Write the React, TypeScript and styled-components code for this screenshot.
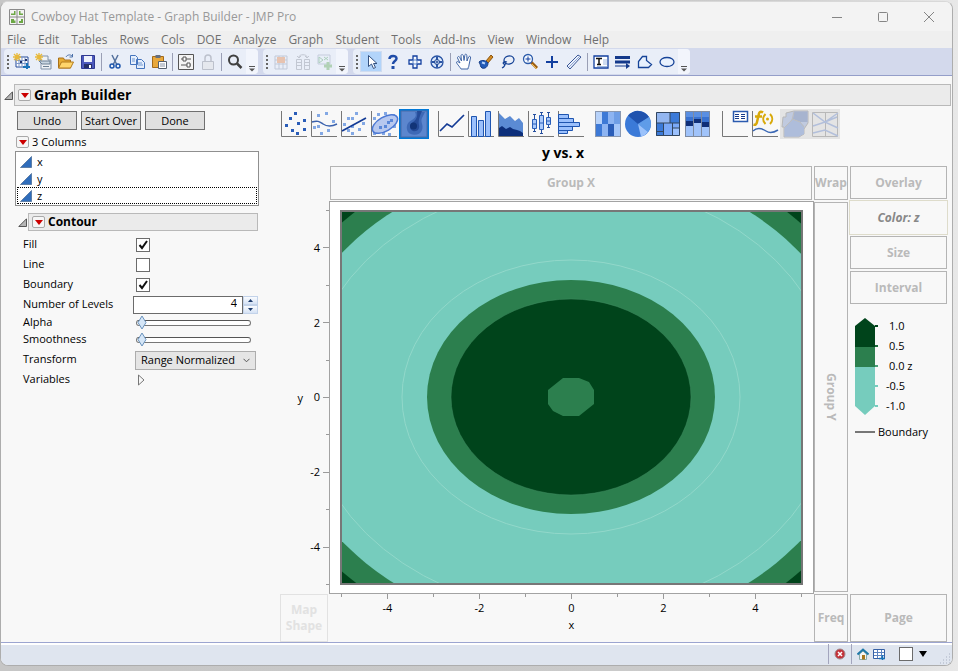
import React from "react";
import styled, { createGlobalStyle, css } from "styled-components";

const GlobalStyle = createGlobalStyle`
  * { box-sizing: border-box; }
  body {
    margin: 0;
    background: #cbcbcb;
    font-family: "Open Sans", "Noto Sans", sans-serif;
    font-size: 11px;
    line-height: 16px;
    color: #000;
  }
  button, input, select { font: inherit; color: inherit; }
  svg { display: block; }
`;

/* ---------- window frame ---------- */

const Desktop = styled.div`
  display: flex;
  min-height: 100vh;
  padding: 1px 5px 5px 0;
  background: linear-gradient(90deg, #c6c6c6 0%, #cbcbcb 80%, #e8e8e8 100%);
`;

const AppWindow = styled.div`
  display: flex;
  flex-direction: column;
  flex: 1;
  min-width: 0;
  border: 1px solid #adadad;
  border-top-color: #d8d8d8;
  border-radius: 8px;
  overflow: hidden;
  background: #f8f8f8;
`;

const TitleBar = styled.header`
  display: flex;
  align-items: center;
  height: 29px;
  padding-left: 8px;
  background: #f3f3f3;
  color: #999;
`;

const WindowTitle = styled.h1`
  flex: 1;
  margin: 0 0 0 6px;
  font-size: 12px;
  font-weight: 400;
`;

const CaptionButton = styled.button`
  display: grid;
  place-items: center;
  width: 46px;
  height: 29px;
  padding: 0;
  border: 0;
  background: none;
`;

const MenuBar = styled.nav`
  display: flex;
  height: 17px;
  background: #efefef;
`;

const MenuItem = styled.button`
  padding: 0 6px;
  border: 0;
  background: none;
  color: #6f6f6f;
  font-size: 12px;
  line-height: 17px;
`;

/* ---------- toolbar ---------- */

const ToolbarArea = styled.div`
  display: flex;
  gap: 5px;
  height: 28px;
  padding: 1px 0 1px 3px;
  border-bottom: 1px solid #949ec9;
  background: #d3d9ec;
`;

const Strip = styled.div`
  display: flex;
  align-items: center;
  height: 25px;
  border-radius: 4px;
  background: #e9eef8;
`;

const Grip = styled.span`
  width: 2px;
  height: 14px;
  margin: 0 2px 0 3px;
  background: repeating-linear-gradient(#666 0 2px, transparent 2px 4px);
`;

const ToolButton = styled.button<{ $active?: boolean; $dim?: boolean }>`
  display: grid;
  place-items: center;
  width: 22px;
  height: 21px;
  padding: 0;
  border: 1px solid ${(p) => (p.$active ? "#cfdcf0" : "transparent")};
  background: ${(p) => (p.$active ? "#b2d4fa" : "none")};
  opacity: ${(p) => (p.$dim ? 0.35 : 1)};
`;

const Separator = styled.span`
  width: 1px;
  height: 18px;
  margin: 0 2px;
  background: #9a9fb5;
`;

const OverflowButton = styled.button`
  display: flex;
  align-items: flex-end;
  justify-content: center;
  align-self: stretch;
  width: 12px;
  padding: 0 0 2px;
  border: 0;
  border-radius: 0 4px 4px 0;
  background: #f2f5fc;
`;

/* ---------- outline headers ---------- */

const OutlineRow = styled.div`
  display: flex;
  align-items: center;
  gap: 1px;
`;

const OutlineBox = styled.div<{ $small?: boolean }>`
  display: flex;
  flex: 1;
  align-items: center;
  gap: 3px;
  height: ${(p) => (p.$small ? 18 : 22)}px;
  padding-left: 3px;
  border: 1px solid #b9b9b9;
  background: #ebebeb;
`;

const OutlineTitle = styled.h2<{ $small?: boolean }>`
  margin: 0;
  font-size: ${(p) => (p.$small ? 12 : 14)}px;
  font-weight: 700;
  line-height: 16px;
`;

const BareButton = styled.button`
  display: grid;
  place-items: center;
  padding: 0;
  border: 0;
  background: none;
`;

const RedButton = styled.button`
  display: grid;
  place-items: center;
  width: 13px;
  height: 12px;
  padding: 0;
  border: 1px solid #a9a9a9;
  border-radius: 2px;
  background: #f6f6f6;
`;

/* ---------- content ---------- */

const Content = styled.main`
  display: flex;
  flex-direction: column;
  flex: 1;
  padding: 8px 1px 0 3px;
`;

const Panels = styled.div`
  display: flex;
  flex: 1;
  gap: 20px;
  padding: 3px 3px 0 11px;
`;

const ControlPanel = styled.aside`
  width: 244px;
  padding-top: 2px;
`;

const ButtonRow = styled.div`
  display: flex;
  gap: 4px;
  padding-left: 2px;
`;

const PushButton = styled.button`
  width: 60px;
  height: 19px;
  padding: 0;
  border: 1px solid #707070;
  background: #e0e0e0;
  line-height: 16px;
  white-space: nowrap;
`;

const ColumnsHeading = styled.div`
  display: flex;
  align-items: center;
  gap: 3px;
  height: 21px;
  padding: 3px 0 0 1px;
`;

const ColumnList = styled.ul`
  margin: 0;
  padding: 1px;
  border: 1px solid #8f8f8f;
  background: #fff;
  list-style: none;
`;

const ColumnItem = styled.li<{ $focused?: boolean }>`
  display: flex;
  align-items: center;
  gap: 5px;
  height: 17px;
  padding-left: 2px;
  border: 1px dotted ${(p) => (p.$focused ? "#000" : "transparent")};
`;

const ContourHeader = styled(OutlineRow)`
  padding: 7px 1px 0 3px;
`;

const OptionGrid = styled.div`
  display: grid;
  grid-template-columns: 110px 125px;
  grid-template-rows: 20px 20px 20px 19px 17px 18px 22px 18px;
  align-items: center;
  padding: 4px 0 0 8px;
`;

const OptionLabel = styled.label`
  padding-bottom: 2px;
  line-height: 16px;
`;

const CheckBox = styled.input`
  appearance: none;
  width: 14px;
  height: 14px;
  margin: 0 0 0 3px;
  border: 1px solid #6b6b6b;
  background: #fff;
  &:checked {
    background: #fff url("data:image/svg+xml,%3Csvg xmlns='http://www.w3.org/2000/svg' viewBox='0 0 12 12'%3E%3Cpath d='M2.5 6l2.5 3 5-7' fill='none' stroke='%23111' stroke-width='2'/%3E%3C/svg%3E");
  }
`;

const NumberField = styled.div`
  display: flex;
  height: 18px;
`;

const NumberInput = styled.input`
  width: 110px;
  padding: 0 5px 3px;
  border: 1px solid #6b6b6b;
  background: #fff;
  text-align: right;
`;

const Spinner = styled.div`
  display: flex;
  flex-direction: column;
  width: 15px;
`;

const SpinButton = styled.button`
  display: grid;
  place-items: center;
  flex: 1;
  padding: 0;
  border: 1px solid #c3d3ea;
  background: linear-gradient(#fafcff, #d5e2f5);
`;

const thumb = css`
  appearance: none;
  width: 10px;
  height: 15px;
  margin-top: -6px;
  border: 0;
  background: url("data:image/svg+xml,%3Csvg xmlns='http://www.w3.org/2000/svg' viewBox='0 0 10 15'%3E%3Cpath d='M5 1l4 6.5-4 6.500-4-6.500z' fill='%23d5e6f7' stroke='%236a93bd'/%3E%3C/svg%3E");
`;

const Slider = styled.input`
  appearance: none;
  width: 115px;
  height: 15px;
  margin: 0 0 0 3px;
  background: none;
  &::-webkit-slider-runnable-track {
    height: 6px;
    border: 1px solid #777;
    border-top-color: #555;
    border-radius: 3px;
    background: #fff;
  }
  &::-webkit-slider-thumb { ${thumb} }
`;

const Dropdown = styled.select`
  appearance: none;
  width: 121px;
  height: 19px;
  margin-left: 2px;
  padding: 0 0 0 5px;
  border: 1px solid #adadad;
  border-radius: 0;
  background: #e5e5e5 url("data:image/svg+xml,%3Csvg xmlns='http://www.w3.org/2000/svg' viewBox='0 0 7 5'%3E%3Cpath d='M.5.8l3 3 3-3' fill='none' stroke='%23555'/%3E%3C/svg%3E") no-repeat right 5px center / 7px 5px;
`;

const VariablesButton = styled(BareButton)`
  justify-self: start;
  margin-left: 4px;
`;

/* ---------- graph ---------- */

const GraphPanel = styled.section`
  display: flex;
  flex-direction: column;
  flex: 1;
  min-width: 0;
`;

const ElementBar = styled.div`
  display: flex;
  gap: 7px;
`;

const ElementGroup = styled.div`
  display: flex;
`;

const ElementButton = styled.button<{ $active?: boolean }>`
  width: 30px;
  height: 30px;
  padding: 0;
  border: 0;
  background: none;
  &:disabled { background: #e4e4e4; }
  ${(p) => p.$active && css`background: #0078d7;`}
`;

const GraphTitle = styled.h3`
  margin: 0;
  padding-right: 101px;
  font-size: 14px;
  line-height: 27px;
  text-align: center;
`;

const GraphGrid = styled.div`
  display: grid;
  flex: 1;
  grid-template-columns: 50px minmax(0, 1fr) 34px 100px;
  grid-template-rows: 35px minmax(360px, 1fr) 48px;
`;

const DropZone = styled.button<{ $faint?: boolean }>`
  display: grid;
  place-items: center;
  padding: 0;
  border: 1px solid ${(p) => (p.$faint ? "#e2e2e2" : "#b4b4b4")};
  background: none;
  color: ${(p) => (p.$faint ? "#e2e2e2" : "#bababa")};
  font-size: 12px;
  font-weight: 700;
  line-height: 16px;
`;

const GroupXZone = styled(DropZone)`
  grid-column: 2;
  margin: 0 2px 1px 1px;
`;

const WrapZone = styled(DropZone)`
  margin-bottom: 1px;
`;

const GroupYZone = styled(DropZone)`
  grid-column: 3;
  grid-row: 2;
  margin: 1px 0 2px;
  span { writing-mode: vertical-rl; }
`;

const MapZone = styled(DropZone)`
  grid-column: 1;
  grid-row: 3;
  margin: 0 1px;
`;

const PageZone = styled(DropZone)`
  margin: 0 1px 0 2px;
`;

const RoleColumn = styled.div`
  display: flex;
  flex-direction: column;
  grid-column: 4;
  grid-row: 1 / span 2;
  padding-left: 1px;
`;

const RoleZone = styled(DropZone)`
  height: 33px;
  margin: 0 1px 2px;
`;

const ColorZone = styled(DropZone)`
  height: 35px;
  margin: -1px 0 1px;
  border-color: #dedccb;
  color: #888;
  font-style: italic;
`;

const Legend = styled.div`
  display: flex;
  gap: 7px;
  padding: 10px 0 0 6px;
`;

const LegendLabels = styled.ol`
  margin: 0;
  padding: 0;
  list-style: none;
  line-height: 20px;
`;

const LegendLabel = styled.li<{ $negative?: boolean }>`
  margin-left: ${(p) => (p.$negative ? 0 : 3)}px;
`;

const BoundaryKey = styled.div`
  display: flex;
  align-items: center;
  gap: 3px;
  padding: 8px 0 0 6px;
`;

const BoundaryLine = styled.span`
  width: 20px;
  height: 2px;
  background: #777;
`;

const YAxis = styled.div`
  display: flex;
  align-items: stretch;
  grid-column: 1;
  grid-row: 2;
`;

const YTitle = styled.span`
  align-self: center;
  width: 24px;
  text-align: right;
`;

const YTicks = styled.div`
  display: flex;
  flex: 1;
  flex-direction: column;
  justify-content: space-between;
  padding: 9px 0;
`;

const YTick = styled.div`
  display: flex;
  align-items: center;
  justify-content: flex-end;
  gap: 3px;
  height: 1px;
`;

const YMark = styled.span<{ $major: boolean }>`
  width: ${(p) => (p.$major ? 6 : 3)}px;
  height: 1px;
  background: #9a9a9a;
`;

const PlotFrame = styled.div`
  display: flex;
  grid-column: 2;
  grid-row: 2;
  padding: 8px 10px;
  border: 1px solid #a3a3a3;
  background: #fff;
`;

const PlotBox = styled.div`
  flex: 1;
  min-width: 0;
  border: 2px solid #777;
  background: #76ccbd;
  overflow: hidden;
`;

const PlotSvg = styled.svg`
  width: 100%;
  height: 100%;
`;

const XAxis = styled.div`
  grid-column: 2;
  grid-row: 3;
  text-align: center;
`;

const XTicks = styled.div`
  display: flex;
  justify-content: space-between;
  height: 23px;
  padding: 0 12px;
`;

const XTick = styled.div`
  display: flex;
  flex-direction: column;
  align-items: center;
  gap: 1px;
  width: 1px;
  white-space: nowrap;
`;

const XMark = styled.span<{ $major: boolean }>`
  width: 1px;
  height: ${(p) => (p.$major ? 5 : 3)}px;
  background: #9a9a9a;
`;

/* ---------- status bar ---------- */

const StatusBar = styled.footer`
  display: flex;
  align-items: center;
  justify-content: flex-end;
  height: 23px;
  padding-right: 1px;
  border-top: 1px solid #9ca5d0;
  box-shadow: inset 0 2px #fff;
  background: #dfe5ef;
`;

const StatusSeparator = styled.span`
  width: 1px;
  height: 20px;
  background: #a3a5bd;
`;

const StatusButton = styled(BareButton)`
  width: 16px;
`;

const StatusCheck = styled(CheckBox)`
  margin: 0 6px 0 12px;
`;

const ErrorButton = styled(BareButton)`
  width: 22px;
`;

const HomeGroup = styled.div`
  display: flex;
  padding-left: 3px;
`;

const ResizeGrip = styled.span`
  align-self: flex-end;
  margin-left: 12px;
`;

/* ---------- icons ---------- */

type IconProps = { children: React.ReactNode; w?: number; h?: number };
const Icon = ({ children, w = 18, h = 18 }: IconProps) => (
  <svg width={w} height={h} viewBox={`0 0 ${w} ${h}`} aria-hidden="true" fill="none">{children}</svg>
);

const Spark = () => (
  <path d="M4 0v8M0 4h8M1 1l6 6M7 1l-6 6" stroke="#e8b93a" strokeWidth="1.300" />
);

const JmpLogo = () => (
  <Icon w={16} h={16}>
    <path d="M.5.5h15v15H.5zM8 .5v15M.5 8h15" stroke="#8a8a8a" />
    <path d="M5 2h1.500v4H2V4.500h3zM10 2h1.500v2.500H14V6h-4zM2 10h3v1.500H6.500V14H2zM10 12h2v-2h2v4h-4z" fill="#6ca845" />
  </Icon>
);

const icons: Record<string, React.ReactNode> = {
  "New Data Table": (
    <Icon>
      <path d="M3 4h12v10H3z" fill="#fff" stroke="#244a9a" />
      <path d="M3 7.500h12M3 10.500h12M6 4v10M9 4v10M12 4v10" stroke="#7d97c8" />
      <path d="M7 8h2v2H7zM12 6h2v2h-2z" fill="#1d2f66" />
      <path d="M10 14h7M14 10v6" stroke="#1a73b8" strokeWidth="2" />
      <Spark />
    </Icon>
  ),
  "New Script": (
    <Icon>
      <path d="M5 3h8v4h3v9H6V7H5z" fill="#eef2f6" stroke="#8092a8" />
      <path d="M4 8h11v3H7z" fill="#c8d6e2" stroke="#6c8094" />
      <path d="M8 13.500h6" stroke="#6c8094" />
      <Spark />
    </Icon>
  ),
  Open: (
    <Icon>
      <path d="M1.500 15V5h5l1 2h6v8z" fill="#e7ad35" stroke="#a9711a" />
      <path d="M1.500 15l3-6h12l-3 6z" fill="#ffd66b" stroke="#b27a1d" />
      <path d="M9 4c1-2 4-3 6-1M15.500 1v3h-3" stroke="#4a6fa8" />
    </Icon>
  ),
  Save: (
    <Icon>
      <path d="M2.500 2.500h13v13h-13z" fill="#4d59bd" stroke="#2f3990" />
      <path d="M5 3h8v6H5z" fill="#eef1fb" />
      <path d="M5 11h8v4H5z" fill="#262f66" />
      <path d="M10 12h2v3h-2z" fill="#fff" />
    </Icon>
  ),
  Cut: (
    <Icon>
      <path d="M6 2l5 10M12 2L7 12" stroke="#53709c" strokeWidth="1.500" />
      <circle cx="6" cy="13" r="2" stroke="#1d55ab" strokeWidth="1.500" />
      <circle cx="12" cy="13" r="2" stroke="#1d55ab" strokeWidth="1.500" />
    </Icon>
  ),
  Copy: (
    <Icon>
      <path d="M2.500 2.500h5l2 2v7h-7zM8.500 6.500h5l3 3v6h-8z" fill="#e6effc" stroke="#4574bd" />
      <path d="M4 6h3M4 8h3M10 10h4M10 12h5" stroke="#6e96d1" />
    </Icon>
  ),
  Paste: (
    <Icon>
      <path d="M2.500 3.500h11v11h-11z" fill="#e9a83b" stroke="#a36a1b" />
      <path d="M5.500 2h5v3h-5z" fill="#666f7e" />
      <path d="M8.500 8.500h8v7h-8z" fill="#fff" stroke="#55606f" />
      <path d="M10 11h5M10 13h5" stroke="#8994a6" />
    </Icon>
  ),
  Preferences: (
    <Icon>
      <path d="M1.500 1.500h15v15h-15z" fill="#f4f4f4" stroke="#555" />
      <path d="M4 6h10M4 12h10" stroke="#555" />
      <path d="M6 4h3v4H6zM10 10h3v4h-3z" fill="#fff" stroke="#555" />
    </Icon>
  ),
  Lock: (
    <Icon>
      <path d="M3.500 8.500h11v8h-11z" fill="#e5e8ee" stroke="#bcc1cc" />
      <path d="M6 8V5a3 3 0 016 0v3" stroke="#bcc1cc" strokeWidth="1.500" />
    </Icon>
  ),
  Search: (
    <Icon>
      <circle cx="7.500" cy="7" r="4.500" stroke="#404040" strokeWidth="2" />
      <path d="M11 10.500l4.500 4.500" stroke="#404040" strokeWidth="2.500" />
    </Icon>
  ),
  "Data Filter": (
    <Icon>
      <path d="M3 3h12v13H3zM3 7h12M3 11h12M7 3v13M11 3v13" stroke="#7b87a0" />
      <path d="M5 4h8v6H5z" fill="#e6752e" />
    </Icon>
  ),
  Compare: (
    <Icon>
      <path d="M2.500 6.500h5v10h-5zM10.500 6.500h5v10h-5zM2.500 9.500h5M2.500 12.500h5M10.500 9.500h5M10.500 12.500h5" stroke="#7b808c" />
      <path d="M5 4c0-3 8-3 8 0M3 3l2 2 2-2M11 3l2 2 2-2" stroke="#7b808c" />
    </Icon>
  ),
  "Add Rows": (
    <Icon>
      <path d="M2 2h12v9H2z" fill="#e8eef8" stroke="#8391ae" />
      <path d="M3 4l4 3-4 3zM8 4l4 3M12 4l-4 3" stroke="#3f9650" />
      <path d="M12 9v8M8 13h8" stroke="#4b9d3d" strokeWidth="3" />
    </Icon>
  ),
  Arrow: (
    <Icon>
      <path d="M6.500 2.500v11l3-2.500 2 4.500 2-1-2-4h3.500z" fill="#fff" stroke="#33507f" />
    </Icon>
  ),
  Help: (
    <Icon>
      <path d="M5.500 6c0-4 7-4 7-.5 0 2.500-3.500 2.500-3.500 5.500" stroke="#1f4ca8" strokeWidth="2.500" />
      <path d="M7.500 13h3v3h-3z" fill="#1f4ca8" />
    </Icon>
  ),
  Selection: (
    <Icon>
      <path d="M7 3h4v4h4v4h-4v4H7v-4H3V7h4z" fill="#f5f9ff" stroke="#123f9f" strokeWidth="1.300" />
      <path d="M7 7h4v4H7z" stroke="#5f86c8" />
    </Icon>
  ),
  Scroller: (
    <Icon>
      <circle cx="9" cy="9" r="6" fill="#dce9fb" stroke="#2a55a5" strokeWidth="1.300" />
      <path d="M9 3.500v11M3.500 9h11" stroke="#2a55a5" strokeWidth="2" />
      <circle cx="9" cy="9" r="2.500" fill="#eff6ff" stroke="#174293" />
      <path d="M9 7.500v3M7.500 9h3" stroke="#174293" />
    </Icon>
  ),
  Grabber: (
    <Icon>
      <path d="M6 16c-1-2-5-6-4.500-7s2 0 3.500 1L2.500 5c0-2 2-2 2.500 0l1.500 3L6 3c0-2 2-2 2.500 0L9 7.500l.8-5c.2-2 2-1.500 2 0L12 8l1.500-4c1-1.500 2.500-.5 2 1l-1.500 7c0 2-1 2-1 4z" fill="#fff" stroke="#3f64a5" />
    </Icon>
  ),
  Brush: (
    <Icon>
      <path d="M9 8l5-6 2 2-5 6z" fill="#d38a21" stroke="#895411" />
      <path d="M2 9c3-3 8-1 9 1 0 4-3 6-6 5-2-1-1-3-3-6z" fill="#235bb7" stroke="#163e87" />
      <path d="M5 9.500l3 1" stroke="#b4d2fc" strokeWidth="2" />
    </Icon>
  ),
  Lasso: (
    <Icon>
      <ellipse cx="10" cy="7" rx="5" ry="4" stroke="#164396" strokeWidth="1.300" transform="rotate(-15 10 7)" />
      <path d="M8 9c-3-1-5 1-3 2 1 1 3-1 1-1M6 11c0 2-1 3-3 4" stroke="#164396" strokeWidth="1.300" />
    </Icon>
  ),
  Magnifier: (
    <Icon>
      <path d="M10 9l6 6" stroke="#9c5e13" strokeWidth="3" />
      <path d="M11 11l5 5" stroke="#f1bf51" />
      <circle cx="7" cy="6" r="4.500" fill="#f4f9ff" stroke="#2c5baa" strokeWidth="1.300" />
      <path d="M7 3.500v5M4.500 6h5" stroke="#123f9f" />
    </Icon>
  ),
  Crosshairs: <Icon><path d="M9 3v12M3 9h12" stroke="#123f9f" strokeWidth="2" /></Icon>,
  Line: (
    <Icon>
      <path d="M2 13L13 2l3 2L5 16z" fill="#eaf0fb" stroke="#3b5796" />
      <path d="M4 14L14 4" stroke="#8ea5d4" />
    </Icon>
  ),
  Annotate: (
    <Icon>
      <path d="M2 3h14v12H2z" fill="#fff" stroke="#123f9f" strokeWidth="1.300" />
      <path d="M4 5.500h6M7 6v5M5 11.500h4" stroke="#111" strokeWidth="1.500" />
      <path d="M11 7h4M11 9h4M11 11h4M5 13.500h10" stroke="#9eb9e1" />
    </Icon>
  ),
  "Draw Line": (
    <Icon>
      <path d="M1 4.500h15M1 9h15" stroke="#14398b" strokeWidth="3" />
      <path d="M1 13h13" stroke="#14398b" />
      <path d="M12 10l4 3-4 3z" fill="#14398b" />
    </Icon>
  ),
  Polygon: (
    <Icon><path d="M2.500 14.500v-6l4-5h4v4l5 4-3 3z" fill="#e8f1fe" stroke="#174498" strokeWidth="1.300" /></Icon>
  ),
  Oval: <Icon><ellipse cx="9" cy="9" rx="7" ry="4.500" fill="#e8f1fe" stroke="#174498" strokeWidth="1.300" /></Icon>,
};

const axis = <path d="M2.500 2v25.500H28" stroke="#777" />;
const dots = (pts: number[][], fill: string) =>
  pts.map(([x, y]) => (
    <rect key={`${x}-${y}`} x={x - 1} y={y - 1} width="3" height="3" fill={fill} />
  ));

const chartIcons: Record<string, React.ReactNode> = {
  Points: <>{axis}{dots([[16, 4], [11, 9], [25, 11], [7, 16], [19, 14], [13, 21], [25, 20], [18, 24]], "#2a5db8")}</>,
  Smoother: (
    <>
      {axis}
      {dots([[9, 6], [17, 4], [24, 12], [9, 17], [5, 18], [19, 21], [12, 24]], "#83a8e4")}
      <path d="M3 13c6-2 8 0 11 2s8 3 14 0" stroke="#3b62ad" strokeWidth="1.500" />
    </>
  ),
  "Line of Fit": (
    <>
      {axis}
      {dots([[17, 4], [9, 9], [13, 9], [5, 15], [24, 14], [13, 17], [20, 20], [9, 21], [13, 24]], "#83a8e4")}
      <path d="M3 22L27 9" stroke="#143b95" strokeWidth="1.700" />
    </>
  ),
  Ellipse: (
    <>
      {axis}
      {dots([[16, 4], [5, 9], [9, 5], [24, 6], [14, 24], [20, 25], [5, 24], [25, 17]], "#83a8e4")}
      <ellipse cx="16" cy="15" rx="14" ry="7" fill="#b7c8ef" stroke="#4c78d4" strokeWidth="1.500" transform="rotate(-30 16 15)" />
      {dots([[19, 13], [16, 17], [11, 18], [22, 11]], "#5a87d8")}
    </>
  ),
  Contour: (
    <>
      <rect x="2" y="2" width="26" height="26" fill="#5c86ce" stroke="#4b6ba6" />
      <path d="M16 3c2 4 0 6-3 8-6 3-6 8-4 12 3 4 12 4 14-2 2-5-2-8 0-12l3-6z" fill="#3e69b6" />
      <path d="M18 2c1 6-1 9-4 11-4 3-4 7 0 9 4 1 7-2 6-6-1-5 1-9 3-14z" fill="#254b98" />
      <circle cx="14.500" cy="17" r="3.500" fill="#123477" />
    </>
  ),
  Line: <>{axis}<path d="M4 22l7-7 5 3L28 6" stroke="#143b95" strokeWidth="1.700" /></>,
  Bar: (
    <>
      {axis}
      <path d="M5.500 7.500h5v20h-5zM12.500 11.500h5v16h-5zM19.500 2.500h5v25h-5z" fill="#9bc0fc" stroke="#1f55b0" />
    </>
  ),
  Area: (
    <>
      {axis}
      <path d="M3 27V4l6 6 5-3 5 5 4-3 4 5v13z" fill="#5b8bd4" />
      <path d="M3 27v-8l3-2 4 3 4-2 3 2 4 1 3 1 3 2v3z" fill="#0d2f7b" />
    </>
  ),
  "Box Plot": (
    <>
      {axis}
      <path d="M8.500 5v18M15.500 3v22M22.500 4v15M7 5.500h3M7 22.500h3M14 3.500h3M14 24.500h3M21 3.500h3M21 18.500h3" stroke="#254f9f" />
      <path d="M6.500 10.500h4v9h-4zM13.500 6.500h4v14h-4zM20.500 8.500h4v7h-4z" fill="#a9c9fb" stroke="#2a5fb9" />
      <path d="M6.500 15h4M13.500 14h4M20.500 12h4" stroke="#2a5fb9" />
    </>
  ),
  Histogram: (
    <>
      {axis}
      <path d="M2.500 5.500h10v4h-10zM2.500 9.500h15v4h-15zM2.500 13.500h21v4h-21zM2.500 17.500h14v4h-14zM2.500 21.500h9v3h-9z" fill="#9bc0fc" stroke="#1f55b0" />
    </>
  ),
  Heatmap: (
    <>
      <path d="M2 2h26v26H2z" fill="#6f9ee6" />
      <path d="M3 3h6v12H3z" fill="#b7d2fa" />
      <path d="M9 3h6v12H9zM3 15h6v12H3z" fill="#3d79d6" />
      <path d="M15 3h6v12h-6zM9 15h6v12H9z" fill="#8db4f2" />
      <path d="M15 15h6v12h-6z" fill="#2a5db8" />
      <path d="M21 15h6v12h-6z" fill="#a5c6f9" />
      <path d="M2.500 2.500h25v25h-25z" stroke="#8b98af" />
    </>
  ),
  Pie: (
    <>
      <circle cx="15" cy="15" r="13" fill="#3b7ad8" />
      <path d="M15 15L5 6.500A13 13 0 0126 8z" fill="#2053ae" />
      <path d="M15 15L26 8a13 13 0 01-1 15z" fill="#5f9ce8" />
      <path d="M15 15l10 8a13 13 0 01-7 4.800z" fill="#9bc2fb" />
    </>
  ),
  Treemap: (
    <>
      <path d="M3 3h24v24H3z" fill="#7aa9f8" />
      <path d="M3 3h14v11H3z" fill="#93b6f0" />
      <path d="M17 3h10v11H17zM3 14h7v13H3z" fill="#3b7ad8" />
      <path d="M19 19h8v8h-8z" fill="#9bc0fc" />
      <path d="M3.500 3.500h23v23h-23zM3 14h24M17 3v11M10.500 14v13M19.500 14v13M3 22.500h7M19.500 19h7" stroke="#33465f" />
    </>
  ),
  Mosaic: (
    <>
      <path d="M2 2h25v26H2z" fill="#5a8fe2" />
      <path d="M2 8h25v5H2z" fill="#3972d0" />
      <path d="M3 12h7v5H3zM11 10h7v4h-7zM19 13h8v5h-8z" fill="#0f2f78" />
      <path d="M3 17h7v10H3zM11 14h7v13h-7zM19 18h8v9h-8z" fill="#a0c3fa" />
      <path d="M2.500 2.500h24v25h-24zM10.500 2v25M18.500 2v25" stroke="#7f8ba0" />
    </>
  ),
  "Caption Box": (
    <>
      {axis}
      <path d="M13.500 2.500h14v10h-14z" fill="#fff" stroke="#2a5aaf" strokeWidth="1.500" />
      <path d="M15 5.500h4M15 7.500h4M15 9.500h4M21 5.500h4M21 7.500h4M21 9.500h4" stroke="#14398b" />
    </>
  ),
  Formula: (
    <>
      {axis}
      <path d="M13 3.500c-3-2-4 0-4.500 3L7 13c-.5 3-2 3-3.500 2.500M5 7.500h7" stroke="#d8a90a" strokeWidth="2.500" />
      <path d="M15.500 5c-3 3-3 7 0 10M20 5c3 3 3 7 0 10" stroke="#d8a90a" strokeWidth="2" />
      <circle cx="17.500" cy="10" r="1.500" fill="#d8a90a" />
      <path d="M3 22c5-5 10-2 13 0s7 2 12-1" stroke="#3b68b5" strokeWidth="1.500" />
    </>
  ),
  "Map Shapes": (
    <>
      <path d="M3 8h3V4l8-2h14v12l-4 6v5l-5 3H4V18H2z" fill="#c0cadf" stroke="#b8b8b8" />
      <path d="M14 2.500h13.500V13L20 13l-7-3z" fill="#a7b4cf" />
      <path d="M12 10l8 3 4 4v8l-5 2.500H4.500V19z" fill="#aebddb" />
      <path d="M14 3l-2 8-8 8M12 10l8 3 4 5" stroke="#bdbdbd" />
    </>
  ),
  Parallel: (
    <>
      <path d="M2.500 3.500h25v24h-25zM15.500 3v24" stroke="#b8b8b8" />
      <path d="M3 4l12 9L28 4M3 17l12-4 13 6M3 24l12-3 13 6M15 13l12-5" stroke="#b2bfdb" strokeWidth="1.500" />
    </>
  ),
};

const chartGroups = [
  ["Points", "Smoother", "Line of Fit", "Ellipse", "Contour"],
  ["Line", "Bar", "Area", "Box Plot", "Histogram"],
  ["Heatmap", "Pie", "Treemap", "Mosaic"],
  ["Caption Box", "Formula", "Map Shapes", "Parallel"],
];

const toolStrips = [
  [
    ["New Data Table", "New Script", "Open", "Save"],
    ["Cut", "Copy", "Paste"],
    ["Preferences", "Lock"],
    ["Search"],
  ],
  [["Data Filter", "Compare", "Add Rows"]],
  [
    ["Arrow", "Help", "Selection", "Scroller"],
    ["Grabber", "Brush", "Lasso", "Magnifier", "Crosshairs", "Line"],
    ["Annotate", "Draw Line", "Polygon", "Oval"],
  ],
];

const menus = ["File", "Edit", "Tables", "Rows", "Cols", "DOE", "Analyze", "Graph", "Student", "Tools", "Add-Ins", "View", "Window", "Help"];
const ticks = [-5, -4, -3, -2, -1, 0, 1, 2, 3, 4, 5];
const isLabelled = (t: number) => t % 2 === 0;

const Disclosure = () => (
  <BareButton aria-label="Collapse">
    <Icon w={9} h={9}><path d="M8.500.8v7.700H.8z" fill="#b5b5b5" stroke="#555" /></Icon>
  </BareButton>
);

const RedTriangle = ({ label }: { label: string }) => (
  <RedButton aria-label={label}>
    <Icon w={8} h={5}><path d="M0 0h8L4 5z" fill="#cc0000" /></Icon>
  </RedButton>
);

const ContinuousIcon = () => (
  <Icon w={12} h={12}><path d="M11.500.5v11H.5z" fill="#2f6dbb" stroke="#5e7fa8" /></Icon>
);

const ContourPlot = () => (
  <PlotSvg viewBox="0 0 459 371" preserveAspectRatio="none" role="img" aria-label="Contour plot of z by x and y">
    <rect width="459" height="371" fill="#00441b" />
    <ellipse cx="229" cy="185" rx="314" ry="255" fill="#2c7f4e" />
    <ellipse cx="229" cy="185" rx="290" ry="235" fill="#76ccbd" />
    <g fill="none" stroke="#92d8ca">
      <ellipse cx="229" cy="185" rx="265" ry="215" />
      <ellipse cx="229" cy="185" rx="169" ry="137" />
    </g>
    <ellipse cx="229" cy="185" rx="144" ry="117" fill="#2c7f4e" />
    <ellipse cx="229" cy="185" rx="120" ry="98" fill="#00441b" stroke="#3f8a60" strokeWidth="0.500" />
    <path d="M221 166h16l10 4 5 8v14l-15 12h-16l-10-5-5-7v-14z" fill="#2c7f4e" />
  </PlotSvg>
);

export default function App() {
  return (
    <>
      <GlobalStyle />
      <Desktop>
        <AppWindow>
          <TitleBar>
            <JmpLogo />
            <WindowTitle>Cowboy Hat Template - Graph Builder - JMP Pro</WindowTitle>
            <CaptionButton aria-label="Minimize"><Icon w={12} h={12}><path d="M1 6.500h10" stroke="#858585" /></Icon></CaptionButton>
            <CaptionButton aria-label="Maximize"><Icon w={12} h={12}><rect x="1.500" y="1.500" width="9" height="9" rx="1" stroke="#858585" /></Icon></CaptionButton>
            <CaptionButton aria-label="Close"><Icon w={12} h={12}><path d="M1 1l10 10M11 1L1 11" stroke="#858585" /></Icon></CaptionButton>
          </TitleBar>
          <MenuBar>
            {menus.map((m) => <MenuItem key={m}>{m}</MenuItem>)}
          </MenuBar>
          <ToolbarArea>
            {toolStrips.map((groups, s) => (
              <Strip key={s}>
                <Grip />
                {groups.map((group, g) => (
                  <React.Fragment key={g}>
                    {g > 0 && <Separator />}
                    {group.map((name) => (
                      <ToolButton key={name} aria-label={name} $active={name === "Arrow"} $dim={s === 1}>
                        {icons[name]}
                      </ToolButton>
                    ))}
                  </React.Fragment>
                ))}
                <OverflowButton aria-label="More tools">
                  <Icon w={6} h={6}><path d="M0 .5h6" stroke="#555" /><path d="M0 2.500h6L3 5.500z" fill="#555" /></Icon>
                </OverflowButton>
              </Strip>
            ))}
          </ToolbarArea>

          <Content>
            <OutlineRow>
              <Disclosure />
              <OutlineBox>
                <RedTriangle label="Graph Builder options" />
                <OutlineTitle>Graph Builder</OutlineTitle>
              </OutlineBox>
            </OutlineRow>

            <Panels>
              <ControlPanel>
                <ButtonRow>
                  <PushButton>Undo</PushButton>
                  <PushButton>Start Over</PushButton>
                  <PushButton>Done</PushButton>
                </ButtonRow>
                <ColumnsHeading>
                  <RedTriangle label="Column options" />
                  3 Columns
                </ColumnsHeading>
                <ColumnList>
                  {["x", "y", "z"].map((c) => (
                    <ColumnItem key={c} $focused={c === "z"}><ContinuousIcon />{c}</ColumnItem>
                  ))}
                </ColumnList>
                <ContourHeader>
                  <Disclosure />
                  <OutlineBox $small>
                    <RedTriangle label="Contour options" />
                    <OutlineTitle $small>Contour</OutlineTitle>
                  </OutlineBox>
                </ContourHeader>
                <OptionGrid>
                  <OptionLabel htmlFor="fill">Fill</OptionLabel>
                  <CheckBox id="fill" type="checkbox" defaultChecked />
                  <OptionLabel htmlFor="line">Line</OptionLabel>
                  <CheckBox id="line" type="checkbox" />
                  <OptionLabel htmlFor="boundary">Boundary</OptionLabel>
                  <CheckBox id="boundary" type="checkbox" defaultChecked />
                  <OptionLabel htmlFor="levels">Number of Levels</OptionLabel>
                  <NumberField>
                    <NumberInput id="levels" type="text" inputMode="numeric" defaultValue="4" />
                    <Spinner>
                      <SpinButton aria-label="Increase levels"><Icon w={5} h={3}><path d="M0 3h5L2.500 0z" fill="#1e3d6e" /></Icon></SpinButton>
                      <SpinButton aria-label="Decrease levels"><Icon w={5} h={3}><path d="M0 0h5L2.500 3z" fill="#1e3d6e" /></Icon></SpinButton>
                    </Spinner>
                  </NumberField>
                  <OptionLabel htmlFor="alpha">Alpha</OptionLabel>
                  <Slider id="alpha" type="range" defaultValue={0} />
                  <OptionLabel htmlFor="smoothness">Smoothness</OptionLabel>
                  <Slider id="smoothness" type="range" defaultValue={0} />
                  <OptionLabel htmlFor="transform">Transform</OptionLabel>
                  <Dropdown id="transform" defaultValue="Range Normalized">
                    <option>Range Normalized</option>
                  </Dropdown>
                  <OptionLabel htmlFor="variables">Variables</OptionLabel>
                  <VariablesButton id="variables">
                    <Icon w={8} h={12}><path d="M1.500 1v10L7 6z" fill="#f8f8f8" stroke="#777" /></Icon>
                  </VariablesButton>
                </OptionGrid>
              </ControlPanel>

              <GraphPanel>
                <ElementBar>
                  {chartGroups.map((group) => (
                    <ElementGroup key={group[0]}>
                      {group.map((name) => (
                        <ElementButton
                          key={name}
                          aria-label={name}
                          $active={name === "Contour"}
                          disabled={name === "Map Shapes" || name === "Parallel"}
                        >
                          <Icon w={30} h={30}>{chartIcons[name]}</Icon>
                        </ElementButton>
                      ))}
                    </ElementGroup>
                  ))}
                </ElementBar>
                <GraphTitle>y vs. x</GraphTitle>
                <GraphGrid>
                  <GroupXZone>Group X</GroupXZone>
                  <WrapZone>Wrap</WrapZone>
                  <RoleColumn>
                    <RoleZone>Overlay</RoleZone>
                    <ColorZone>Color: z</ColorZone>
                    <RoleZone>Size</RoleZone>
                    <RoleZone>Interval</RoleZone>
                    <Legend>
                      <Icon w={24} h={100}>
                        <path d="M0 32v-22L10 2l10 8v22z" fill="#00441b" />
                        <path d="M0 31h20v20H0z" fill="#2c7f4e" />
                        <path d="M0 51h20v39l-10 9-10-9z" fill="#76ccbd" />
                        <path d="M20 10h3" stroke="#00441b" strokeWidth="2" />
                        <path d="M20 30h3" stroke="#1d6b3b" strokeWidth="2" />
                        <path d="M20 50h3" stroke="#4a9f78" strokeWidth="2" />
                        <path d="M20 70h3M20 90h3" stroke="#76ccbd" strokeWidth="2" />
                      </Icon>
                      <LegendLabels>
                        <LegendLabel>1.0</LegendLabel>
                        <LegendLabel>0.5</LegendLabel>
                        <LegendLabel>0.0 z</LegendLabel>
                        <LegendLabel $negative>-0.5</LegendLabel>
                        <LegendLabel $negative>-1.0</LegendLabel>
                      </LegendLabels>
                    </Legend>
                    <BoundaryKey><BoundaryLine />Boundary</BoundaryKey>
                  </RoleColumn>

                  <YAxis>
                    <YTitle>y</YTitle>
                    <YTicks>
                      {[...ticks].reverse().map((t) => (
                        <YTick key={t}>
                          {isLabelled(t) && <span>{t}</span>}
                          <YMark $major={isLabelled(t)} />
                        </YTick>
                      ))}
                    </YTicks>
                  </YAxis>
                  <PlotFrame>
                    <PlotBox><ContourPlot /></PlotBox>
                  </PlotFrame>
                  <GroupYZone><span>Group Y</span></GroupYZone>

                  <MapZone $faint>Map<br />Shape</MapZone>
                  <XAxis>
                    <XTicks>
                      {ticks.map((t) => (
                        <XTick key={t}>
                          <XMark $major={isLabelled(t)} />
                          {isLabelled(t) && <span>{t}</span>}
                        </XTick>
                      ))}
                    </XTicks>
                    x
                  </XAxis>
                  <DropZone>Freq</DropZone>
                  <PageZone>Page</PageZone>
                </GraphGrid>
              </GraphPanel>
            </Panels>
          </Content>

          <StatusBar>
            <StatusSeparator />
            <ErrorButton aria-label="Errors">
              <Icon w={12} h={12}>
                <circle cx="6" cy="6" r="5" fill="#c33138" stroke="#9f8a8e" />
                <path d="M4 4l4 4M8 4L4 8" stroke="#fff" strokeWidth="1.500" />
              </Icon>
            </ErrorButton>
            <StatusSeparator />
            <HomeGroup>
              <StatusButton aria-label="Home">
                <Icon w={12} h={12}>
                  <path d="M2.500 6v5.500h7V6L6 3z" fill="#f4f4f4" stroke="#8aa" />
                  <path d="M.5 6.500L6 1.500l5.500 5" stroke="#1e78a8" strokeWidth="2" />
                  <path d="M5 7h3v4.500H5z" fill="#a8761b" />
                </Icon>
              </StatusButton>
              <StatusButton aria-label="Data table">
                <Icon w={12} h={12}>
                  <path d="M.5 1.500h11v9H.5z" fill="#fff" stroke="#3661a5" />
                  <path d="M1 4.500h10M1 7.500h10M4.500 2v8M8.500 2v8" stroke="#5c83c1" />
                  <path d="M6 10.500h6M9.500 7v5" stroke="#1a73b8" strokeWidth="1.500" />
                </Icon>
              </StatusButton>
            </HomeGroup>
            <StatusCheck type="checkbox" aria-label="Select window" />
            <BareButton aria-label="Window menu">
              <Icon w={8} h={6}><path d="M0 0h8L4 6z" fill="#000" /></Icon>
            </BareButton>
            <ResizeGrip>
              <Icon w={12} h={12}>
                <path d="M10 1h1M7 4h1M10 4h1M4 7h1M7 7h1M10 7h1M1 10h1M4 10h1M7 10h1M10 10h1" stroke="#a9b1c2" strokeWidth="1" />
              </Icon>
            </ResizeGrip>
          </StatusBar>
        </AppWindow>
      </Desktop>
    </>
  );
}
